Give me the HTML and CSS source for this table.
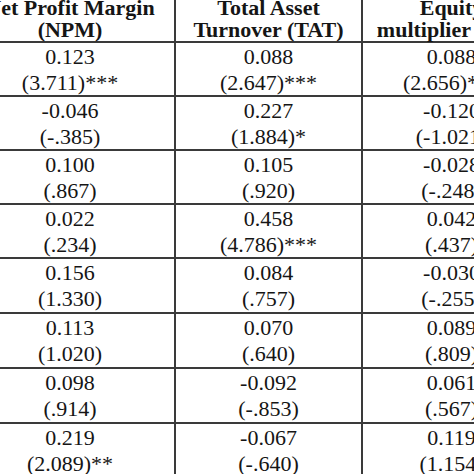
FILE: index.html
```html
<!DOCTYPE html>
<html lang="en">
<head>
<meta charset="utf-8">
<title>Regression results</title>
<link rel="stylesheet" href="styles.css">
</head>
<body>
<div class="frame">
<table class="results">
  <colgroup>
    <col class="c1">
    <col class="c2">
    <col class="c3">
  </colgroup>
  <thead>
    <tr>
      <th>Net Profit Margin<br>(NPM)</th>
      <th>Total Asset<br>Turnover (TAT)</th>
      <th>Equity<br>multiplier (EM)</th>
    </tr>
  </thead>
  <tbody>
    <tr class="h54">
      <td>0.123<br>(3.711)***</td>
      <td>0.088<br>(2.647)***</td>
      <td>0.088<br>(2.656)***</td>
    </tr>
    <tr class="h53">
      <td>-0.046<br>(-.385)</td>
      <td>0.227<br>(1.884)*</td>
      <td>-0.120<br>(-1.021)</td>
    </tr>
    <tr class="h53">
      <td>0.100<br>(.867)</td>
      <td>0.105<br>(.920)</td>
      <td>-0.028<br>(-.248)</td>
    </tr>
    <tr class="h53">
      <td>0.022<br>(.234)</td>
      <td>0.458<br>(4.786)***</td>
      <td>0.042<br>(.437)</td>
    </tr>
    <tr class="h55">
      <td>0.156<br>(1.330)</td>
      <td>0.084<br>(.757)</td>
      <td>-0.030<br>(-.255)</td>
    </tr>
    <tr class="h55">
      <td>0.113<br>(1.020)</td>
      <td>0.070<br>(.640)</td>
      <td>0.089<br>(.809)</td>
    </tr>
    <tr class="h55">
      <td>0.098<br>(.914)</td>
      <td>-0.092<br>(-.853)</td>
      <td>0.061<br>(.567)</td>
    </tr>
    <tr class="h54">
      <td>0.219<br>(2.089)**</td>
      <td>-0.067<br>(-.640)</td>
      <td>0.119<br>(1.154)</td>
    </tr>
  </tbody>
</table>
</div>
</body>
</html>
```
FILE: styles.css
```css
html, body {
  margin: 0;
  padding: 0;
  background: #ffffff;
  overflow: hidden;
}

.frame {
  width: 474px;
  height: 474px;
  overflow: hidden;
}

.results {
  border-collapse: separate;
  border-spacing: 0;
  table-layout: fixed;
  width: 574px;
  margin-left: -34px;
  margin-top: -3px;
  font-family: "Liberation Serif", "Times New Roman", serif;
  color: #151515;
}

.c1 { width: 208px; }
.c2 { width: 187px; }
.c3 { width: 179px; }

.results th {
  font-size: 22px;
  font-weight: bold;
  line-height: 22px;
  padding: 0;
  text-align: center;
  white-space: nowrap;
}

.results td {
  font-size: 22px;
  line-height: 25.5px;
  padding: 1px 0 0 0;
  text-align: center;
  vertical-align: top;
  white-space: nowrap;
  border-top: 2px solid #3a3a3a;
  box-sizing: border-box;
}

.results th + th,
.results td + td {
  border-left: 2px solid #3a3a3a;
}

.results tr.h53 td { height: 53px; }
.results tr.h54 td { height: 54px; }
.results tr.h55 td { height: 55px; }
```
